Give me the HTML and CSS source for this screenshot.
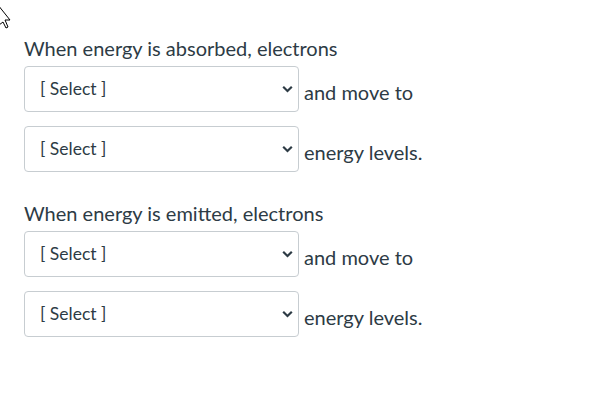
FILE: index.html
```html
<!DOCTYPE html>
<html>
<head>
<meta charset="utf-8">
<link rel="stylesheet" href="styles.css">
</head>
<body>
<svg class="cursor" width="14" height="28" viewBox="0 0 14 28"><path d="M-6 -2 L10 18 L5 18 L8 25 L6 26 L3 20 L-1 23 Z" fill="#fff" stroke="#000" stroke-width="1"/></svg>
<div class="quiz">
  <div class="block">
    <p class="lead">When energy is absorbed, electrons</p>
    <div class="row">
      <div class="select"><span>[ Select ]</span><svg class="chev" width="11" height="8" viewBox="0 0 11 8"><path d="M1.2 1.8 L5.5 6 L9.8 1.8" fill="none" stroke="#2d3b45" stroke-width="2.2"/></svg></div>
      <span class="tail">and move to</span>
    </div>
    <div class="row">
      <div class="select"><span>[ Select ]</span><svg class="chev" width="11" height="8" viewBox="0 0 11 8"><path d="M1.2 1.8 L5.5 6 L9.8 1.8" fill="none" stroke="#2d3b45" stroke-width="2.2"/></svg></div>
      <span class="tail">energy levels.</span>
    </div>
  </div>
  <div class="block">
    <p class="lead">When energy is emitted, electrons</p>
    <div class="row">
      <div class="select"><span>[ Select ]</span><svg class="chev" width="11" height="8" viewBox="0 0 11 8"><path d="M1.2 1.8 L5.5 6 L9.8 1.8" fill="none" stroke="#2d3b45" stroke-width="2.2"/></svg></div>
      <span class="tail">and move to</span>
    </div>
    <div class="row">
      <div class="select"><span>[ Select ]</span><svg class="chev" width="11" height="8" viewBox="0 0 11 8"><path d="M1.2 1.8 L5.5 6 L9.8 1.8" fill="none" stroke="#2d3b45" stroke-width="2.2"/></svg></div>
      <span class="tail">energy levels.</span>
    </div>
  </div>
</div>
</body>
</html>
```
FILE: styles.css
```css
html, body { margin: 0; padding: 0; background: #fff; }
body { font-family: Lato, "Open Sans", sans-serif; color: #2d3b45; position: relative; width: 609px; height: 402px; overflow: hidden; }
.cursor { position: absolute; left: 0; top: 2px; }
.quiz { padding: 36px 0 0 24px; display: flex; flex-direction: column; gap: 29px; }
.block { display: flex; flex-direction: column; }
.lead { margin: 0 0 6px 0; font-size: 20px; line-height: 24px; }
.row { display: flex; align-items: flex-end; margin-bottom: 14px; }
.row:last-child { margin-bottom: 0; }
.select { box-sizing: border-box; width: 275px; height: 46px; border: 1px solid #c7cdd1; border-radius: 4px; display: flex; align-items: center; justify-content: space-between; padding: 0 5px 0 15px; font-size: 17.5px; }
.select span { margin-top: -2px; }
.tail { font-size: 20px; line-height: 24px; margin-left: 5px; margin-bottom: 8px; }
```
